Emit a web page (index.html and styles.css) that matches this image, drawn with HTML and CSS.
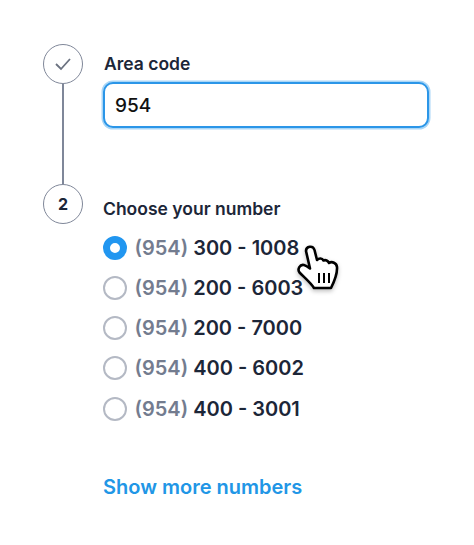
FILE: index.html
```html
<!DOCTYPE html>
<html lang="en">
  <head>
    <meta charset="UTF-8" />
    <meta name="viewport" content="width=device-width, initial-scale=1.0" />
    <title>Choose your number</title>
    <link rel="stylesheet" href="styles.css">
  </head>
  <body>
    <div class="wizard">
      <div class="rail">
        <div class="step">
          <svg width="18" height="14" viewBox="0 0 18 14" fill="none">
            <path d="M2 7 L7 12 L16 2" stroke="#6b7280" stroke-width="1.8" />
          </svg>
        </div>
        <div class="rail-line"></div>
        <div class="step">2</div>
      </div>

      <div class="content">
        <label class="area-label" for="area">Area code</label>
        <input class="area-input" id="area" type="text" value="954" />

        <h2 class="choose-label">Choose your number</h2>
        <div class="numbers">
          <div class="number">
            <span class="radio checked"></span>
            <span><span class="prefix">(954)</span> 300 - 1008</span>
            <svg class="cursor" width="44" height="50" viewBox="0 0 44 50">
              <path d="M10 8 C10 3 17 2 18.500 7 L21 17 C23 15 26 15 27.500 17.500 C29.500 16.500 32 17.500 33 20 C36 18 40.500 20 41 24 C41.500 31 38.500 38 35 45 L18 45 C15 40 9 35 3.500 29.500 C1 26 4 21 8 22 C10 22.500 12 24 14 25.500 Z" fill="#fff" stroke="#000" stroke-width="2.6" stroke-linejoin="round" />
              <path d="M23 30 V40 M28 30 V40 M33 30 V40" stroke="#000" stroke-width="2" />
            </svg>
          </div>
          <div class="number">
            <span class="radio"></span>
            <span><span class="prefix">(954)</span> 200 - 6003</span>
          </div>
          <div class="number">
            <span class="radio"></span>
            <span><span class="prefix">(954)</span> 200 - 7000</span>
          </div>
          <div class="number">
            <span class="radio"></span>
            <span><span class="prefix">(954)</span> 400 - 6002</span>
          </div>
          <div class="number">
            <span class="radio"></span>
            <span><span class="prefix">(954)</span> 400 - 3001</span>
          </div>
        </div>

        <a class="show-more" href="#">Show more numbers</a>
      </div>
    </div>
  </body>
</html>
```

FILE: styles.css
```css
body {
  font-family: Inter, "Liberation Sans", sans-serif;
  margin: 0;
  background: #fff;
  color: #1c2638;
}
.wizard {
  display: flex;
  gap: 20px;
  padding: 44px 45px 0 43px;
}
.rail {
  display: flex;
  flex-direction: column;
  align-items: center;
  width: 40px;
  flex: none;
}
.step {
  box-sizing: border-box;
  width: 40px;
  height: 40px;
  flex: none;
  display: flex;
  align-items: center;
  justify-content: center;
  border: 1.5px solid #7f8799;
  border-radius: 50%;
  font-size: 16px;
  font-weight: 700;
}
.rail-line {
  width: 1.5px;
  height: 100px;
  background: #7f8799;
}
.content {
  flex: 1;
  min-width: 0;
}
.area-label {
  display: block;
  margin: 10px 0 8px 1px;
  font-size: 17.5px;
  line-height: 20px;
  font-weight: 600;
}
.area-input {
  display: block;
  box-sizing: border-box;
  width: 326px;
  height: 46px;
  padding: 0 10px;
  border: 2px solid #2b96e8;
  border-radius: 10px;
  box-shadow: 0 0 0 1.5px #a9d6f7;
  font: 500 19px Inter, "Liberation Sans", sans-serif;
  color: #111;
  outline: none;
}
.choose-label {
  margin: 71px 0 8.5px;
  font-size: 17.5px;
  line-height: 20px;
  font-weight: 600;
}
.number {
  position: relative;
  display: flex;
  align-items: center;
  height: 40.25px;
  font-size: 20px;
  font-weight: 600;
}
.prefix {
  color: #737c8f;
}
.radio {
  box-sizing: border-box;
  width: 24px;
  height: 24px;
  margin-right: 7.5px;
  border: 2px solid #b4b9c4;
  border-radius: 50%;
  background: #fff;
}
.radio.checked {
  border: 7px solid #2196f0;
}
.cursor {
  position: absolute;
  left: 193px;
  top: 15px;
  filter: drop-shadow(0 2px 2px rgba(0, 0, 0, 0.25));
}
.show-more {
  display: block;
  margin-top: 46.5px;
  font-size: 20px;
  line-height: 24px;
  font-weight: 600;
  color: #2196e6;
  text-decoration: none;
}
```
